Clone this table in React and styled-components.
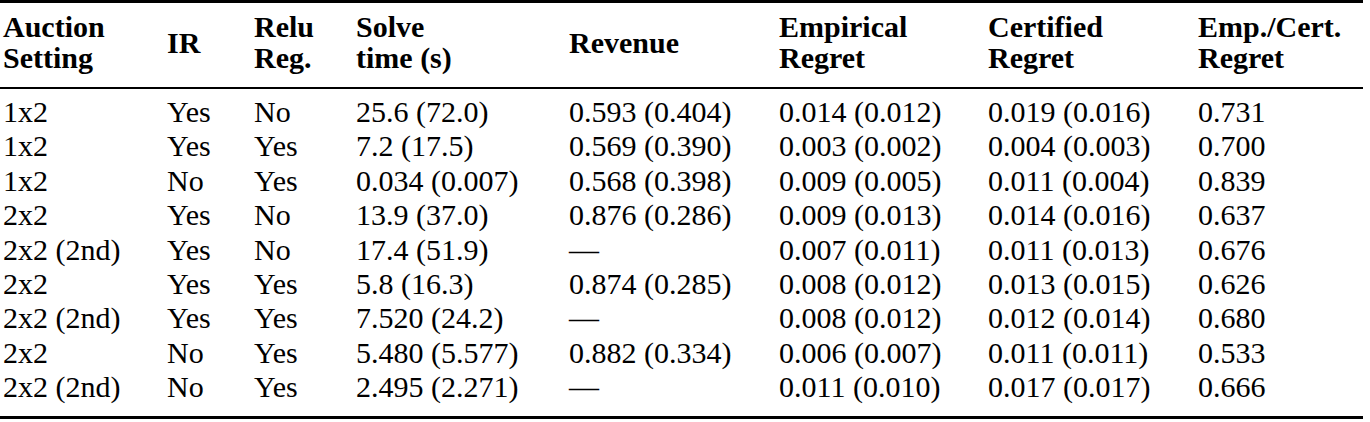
import React from 'react';
import styled, { createGlobalStyle } from 'styled-components';

const GlobalStyle = createGlobalStyle`
  html, body {
    margin: 0;
    padding: 0;
    background: #ffffff;
  }
  body {
    font-family: "Liberation Serif", "Times New Roman", serif;
    color: #000000;
  }
`;

const Table = styled.table`
  width: 1363px;
  table-layout: fixed;
  border-collapse: collapse;
  border-top: 3px solid #000;
  border-bottom: 3px solid #000;
  font-family: "Liberation Serif", "Times New Roman", serif;
  font-size: 30px;
  color: #000;
`;

const HeadRow = styled.tr`
  border-bottom: 2px solid #000;
`;

const HeadCell = styled.th`
  text-align: left;
  vertical-align: middle;
  font-weight: bold;
  line-height: 31px;
  padding: 8px 0 14px 3px;
`;

const Cell = styled.td`
  text-align: left;
  white-space: nowrap;
  line-height: 34.4px;
  padding: ${({ $first, $last }) =>
    `${$first ? 6 : 0}px 0 ${$last ? 11.5 : 0}px 3px`};
`;

const widths = [164, 87, 102, 213, 210, 209, 210, 168];

const headers = [
  ['Auction', 'Setting'],
  ['IR'],
  ['Relu', 'Reg.'],
  ['Solve', 'time (s)'],
  ['Revenue'],
  ['Empirical', 'Regret'],
  ['Certified', 'Regret'],
  ['Emp./Cert.', 'Regret'],
];

const rows = [
  ['1x2', 'Yes', 'No', '25.6 (72.0)', '0.593 (0.404)', '0.014 (0.012)', '0.019 (0.016)', '0.731'],
  ['1x2', 'Yes', 'Yes', '7.2 (17.5)', '0.569 (0.390)', '0.003 (0.002)', '0.004 (0.003)', '0.700'],
  ['1x2', 'No', 'Yes', '0.034 (0.007)', '0.568 (0.398)', '0.009 (0.005)', '0.011 (0.004)', '0.839'],
  ['2x2', 'Yes', 'No', '13.9 (37.0)', '0.876 (0.286)', '0.009 (0.013)', '0.014 (0.016)', '0.637'],
  ['2x2 (2nd)', 'Yes', 'No', '17.4 (51.9)', '—', '0.007 (0.011)', '0.011 (0.013)', '0.676'],
  ['2x2', 'Yes', 'Yes', '5.8 (16.3)', '0.874 (0.285)', '0.008 (0.012)', '0.013 (0.015)', '0.626'],
  ['2x2 (2nd)', 'Yes', 'Yes', '7.520 (24.2)', '—', '0.008 (0.012)', '0.012 (0.014)', '0.680'],
  ['2x2', 'No', 'Yes', '5.480 (5.577)', '0.882 (0.334)', '0.006 (0.007)', '0.011 (0.011)', '0.533'],
  ['2x2 (2nd)', 'No', 'Yes', '2.495 (2.271)', '—', '0.011 (0.010)', '0.017 (0.017)', '0.666'],
];

const App = () => (
  <>
    <GlobalStyle />
    <Table>
      <colgroup>
        {widths.map((w, i) => (
          <col key={i} style={{ width: w }} />
        ))}
      </colgroup>
      <thead>
        <HeadRow>
          {headers.map((lines, i) => (
            <HeadCell key={i}>
              {lines.map((l, j) => (
                <React.Fragment key={j}>
                  {j > 0 && <br />}
                  {l}
                </React.Fragment>
              ))}
            </HeadCell>
          ))}
        </HeadRow>
      </thead>
      <tbody>
        {rows.map((row, r) => (
          <tr key={r}>
            {row.map((v, c) => (
              <Cell key={c} $first={r === 0} $last={r === rows.length - 1}>
                {v}
              </Cell>
            ))}
          </tr>
        ))}
      </tbody>
    </Table>
  </>
);

export default App;
